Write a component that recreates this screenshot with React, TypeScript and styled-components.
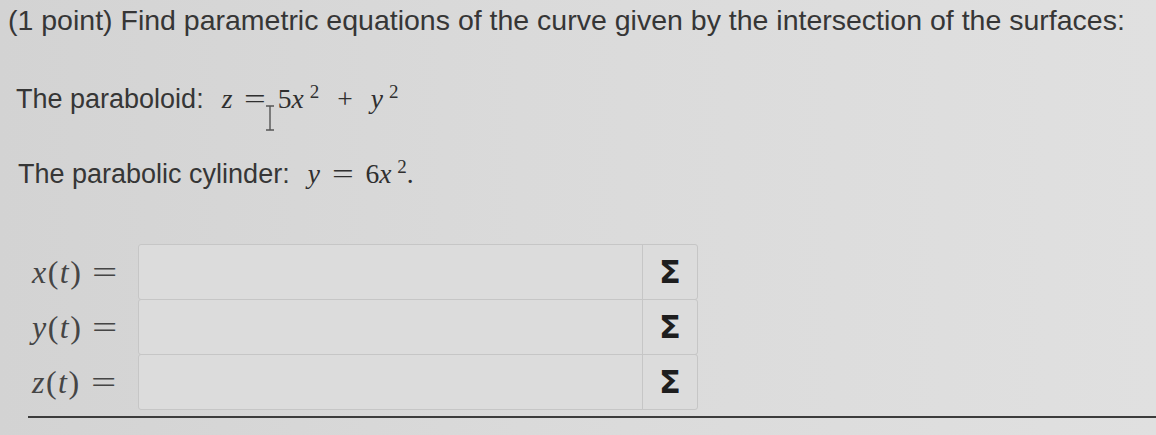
import React from 'react'
import styled, { createGlobalStyle } from 'styled-components'

const GlobalStyle = createGlobalStyle`
    html, body {
        margin: 0;
        padding: 0;
        background: #d9d9d9;
    }
    * { box-sizing: border-box; }
`

const Page = styled.div`
    position: relative;
    width: 1156px;
    height: 435px;
    overflow: hidden;
    padding: 4px 0 0 8px;
    background: linear-gradient(90deg, #d3d3d3 0%, #dadada 45%, #e0e0e0 100%);
    font-family: 'Liberation Sans', Arial, sans-serif;
    color: #363636;
`

const Title = styled.div`
    font-size: 28.5px;
    line-height: 32px;
    white-space: nowrap;
`

const Statement = styled.div<{ $top: number; $left: number; $gap: number }>`
    margin-top: ${p => p.$top}px;
    margin-left: ${p => p.$left}px;
    font-size: 27px;
    line-height: 30px;
    white-space: nowrap;
    display: flex;
    align-items: baseline;
    gap: ${p => p.$gap}px;
`

const Math = styled.span`
    font-family: 'Liberation Serif', 'Times New Roman', serif;
    font-size: 27.5px;
    color: #2f2f2f;
`

const Var = styled.i`
    font-style: italic;
`

const Op = styled.span<{ $gap?: number; $sx?: number }>`
    display: inline-block;
    margin: 0 ${p => p.$gap ?? 14}px;
    font-style: normal;
    transform: scaleX(${p => p.$sx ?? 1});
`

const Sup = styled.sup`
    font-size: 19px;
    vertical-align: 10px;
    line-height: 0;
    margin-left: 6px;
`

const Answers = styled.div`
    margin-top: 56px;
    margin-left: 20px;
    display: grid;
    grid-template-columns: 110px 560px;
    grid-auto-rows: 55px;
    width: 670px;
`

const Label = styled.div`
    display: flex;
    align-items: center;
    font-family: 'Liberation Serif', 'Times New Roman', serif;
    font-size: 32px;
    letter-spacing: 1.5px;
    color: #454545;
    padding-left: 4px;
`

const Field = styled.div`
    display: flex;
    border: 1px solid #c6c6c6;
    border-radius: 3px;
    background: #dcdcdc;
    margin-top: -1px;
`

const Input = styled.div`
    flex: 1;
`

const SigmaButton = styled.div`
    width: 55px;
    display: flex;
    align-items: center;
    justify-content: center;
    border-left: 1px solid #c6c6c6;
    font-family: 'DejaVu Sans', sans-serif;
    font-weight: bold;
    font-size: 32px;
    color: #1e1e1e;
`

const Rule = styled.div`
    margin-top: 6px;
    margin-left: 20px;
    height: 2px;
    background: #3c3c3c;
`

const Cursor = styled.svg`
    position: absolute;
    left: 263px;
    top: 105px;
`

const rows = ['x', 'y', 'z']

export default function App() {
    return (
        <Page>
            <GlobalStyle />
            <Title>(1 point) Find parametric equations of the curve given by the intersection of the surfaces:</Title>

            <Statement $top={48} $left={8} $gap={18}>
                The paraboloid:
                <Math>
                    <Var>z</Var>
                    <Op $gap={15} $sx={1.4}>=</Op>5<Var>x</Var>
                    <Sup>2</Sup>
                    <Op $gap={18}>+</Op>
                    <Var>y</Var>
                    <Sup>2</Sup>
                </Math>
            </Statement>

            <Statement $top={45} $left={10} $gap={18}>
                The parabolic cylinder:
                <Math>
                    <Var>y</Var>
                    <Op $gap={15} $sx={1.4}>=</Op>6<Var>x</Var>
                    <Sup>2</Sup>.
                </Math>
            </Statement>

            <Answers>
                {rows.map(v => (
                    <React.Fragment key={v}>
                        <Label>
                            <Var>{v}</Var>(<Var>t</Var>)<Op $gap={14} $sx={1.4}>=</Op>
                        </Label>
                        <Field>
                            <Input />
                            <SigmaButton>Σ</SigmaButton>
                        </Field>
                    </React.Fragment>
                ))}
            </Answers>

            <Rule />

            {/* mouse text cursor in the photo */}
            <Cursor width="14" height="26" viewBox="0 0 14 26">
                <path d="M3 1h8M7 1v24M3 25h8" stroke="#555" strokeWidth="1.4" fill="none" />
            </Cursor>
        </Page>
    )
}
